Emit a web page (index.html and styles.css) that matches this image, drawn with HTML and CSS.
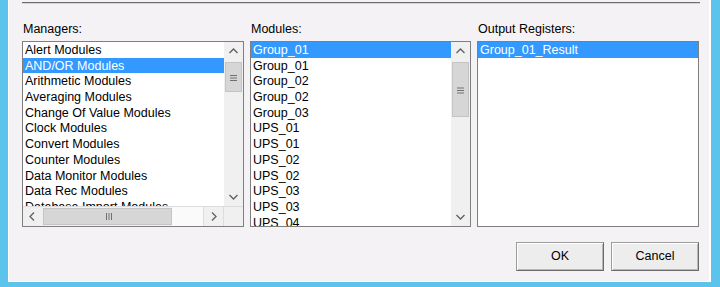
FILE: index.html
```html
<!DOCTYPE html>
<html>
<head>
<meta charset="utf-8">
<link rel="stylesheet" href="styles.css">
</head>
<body>
<div class="frame">
  <div class="dialog">
    <div class="topline"></div>
    <div class="columns">
      <div class="col">
        <div class="label">Managers:</div>
        <div class="listbox hasv hash">
          <div class="items">
            <div class="item">Alert Modules</div>
            <div class="item sel">AND/OR Modules</div>
            <div class="item">Arithmetic Modules</div>
            <div class="item">Averaging Modules</div>
            <div class="item">Change Of Value Modules</div>
            <div class="item">Clock Modules</div>
            <div class="item">Convert Modules</div>
            <div class="item">Counter Modules</div>
            <div class="item">Data Monitor Modules</div>
            <div class="item">Data Rec Modules</div>
            <div class="item">Database Import Modules</div>
          </div>
          <div class="vscroll">
            <div class="sbtn"><svg width="19" height="19" viewBox="0 0 19 19"><polyline points="5.5,11 9.5,7 13.5,11" fill="none" stroke="#606060" stroke-width="1.3"/></svg></div>
            <div class="vthumb t1"><svg width="19" height="30" viewBox="0 0 19 30"><path d="M6 12.5h7M6 15h7M6 17.5h7" stroke="#707070" stroke-width="1"/></svg></div>
            <div class="vtrack"></div>
            <div class="sbtn"><svg width="19" height="19" viewBox="0 0 19 19"><polyline points="5.5,8 9.5,12 13.5,8" fill="none" stroke="#606060" stroke-width="1.3"/></svg></div>
          </div>
          <div class="hscroll">
            <div class="sbtn"><svg width="19" height="19" viewBox="0 0 19 19"><polyline points="11,5.5 7,9.5 11,13.5" fill="none" stroke="#606060" stroke-width="1.3"/></svg></div>
            <div class="hthumb"><svg width="129" height="19" viewBox="0 0 129 19"><path d="M62.5 6v7M65 6v7M67.5 6v7" stroke="#707070" stroke-width="1"/></svg></div>
            <div class="htrack"></div>
            <div class="sbtn bl"><svg width="19" height="19" viewBox="0 0 19 19"><polyline points="8,5.5 12,9.5 8,13.5" fill="none" stroke="#606060" stroke-width="1.3"/></svg></div>
            <div class="corner"></div>
          </div>
        </div>
      </div>
      <div class="col">
        <div class="label">Modules:</div>
        <div class="listbox hasv">
          <div class="items">
            <div class="item sel">Group_01</div>
            <div class="item">Group_01</div>
            <div class="item">Group_02</div>
            <div class="item">Group_02</div>
            <div class="item">Group_03</div>
            <div class="item">UPS_01</div>
            <div class="item">UPS_01</div>
            <div class="item">UPS_02</div>
            <div class="item">UPS_02</div>
            <div class="item">UPS_03</div>
            <div class="item">UPS_03</div>
            <div class="item">UPS_04</div>
          </div>
          <div class="vscroll full">
            <div class="sbtn"><svg width="19" height="19" viewBox="0 0 19 19"><polyline points="5.5,11 9.5,7 13.5,11" fill="none" stroke="#606060" stroke-width="1.3"/></svg></div>
            <div class="vthumb t2"><svg width="19" height="55" viewBox="0 0 19 55"><path d="M6 25h7M6 27.5h7M6 30h7" stroke="#707070" stroke-width="1"/></svg></div>
            <div class="vtrack"></div>
            <div class="sbtn"><svg width="19" height="19" viewBox="0 0 19 19"><polyline points="5.5,8 9.5,12 13.5,8" fill="none" stroke="#606060" stroke-width="1.3"/></svg></div>
          </div>
        </div>
      </div>
      <div class="col">
        <div class="label">Output Registers:</div>
        <div class="listbox">
          <div class="items">
            <div class="item sel">Group_01_Result</div>
          </div>
        </div>
      </div>
    </div>
    <div class="buttons">
      <div class="btn">OK</div>
      <div class="btn">Cancel</div>
    </div>
  </div>
</div>
</body>
</html>
```
FILE: styles.css
```css
html, body {
  margin: 0;
  padding: 0;
}
body {
  width: 720px;
  height: 287px;
  overflow: hidden;
  font-family: "Liberation Sans", Arial, sans-serif;
  font-size: 12.5px;
  color: #000;
}
.frame {
  box-sizing: border-box;
  width: 720px;
  height: 287px;
  background: #5cc3ec;
  padding: 0 9px 5px 8px;
}
.dialog {
  box-sizing: border-box;
  height: 282px;
  background: #f5f2f5;
  border-left: 1px solid #ffffff;
  border-right: 2px solid #ffffff;
  border-bottom: 1px solid #ffffff;
  padding-left: 13px;
  padding-top: 2px;
}
.topline {
  width: 678px;
  height: 1px;
  background: #6e6e6e;
  border-bottom: 1px solid #d6d4d6;
}
.columns {
  display: grid;
  grid-template-columns: 222px 221px 222px;
  column-gap: 6px;
  margin-top: 18px;
}
.col {
  display: flex;
  flex-direction: column;
}
.label {
  height: 15px;
  line-height: 15px;
  margin-bottom: 4px;
  padding-left: 1px;
}
.listbox {
  box-sizing: border-box;
  height: 186px;
  border: 1px solid #7f7f7f;
  background: #ffffff;
  display: grid;
  grid-template-columns: 1fr;
  grid-template-rows: 1fr;
  overflow: hidden;
}
.listbox.hasv {
  grid-template-columns: 1fr 19px;
}
.listbox.hash {
  grid-template-rows: 1fr 20px;
}
.items {
  overflow: hidden;
  min-height: 0;
}
.item {
  height: 15.7px;
  line-height: 16.5px;
  padding-left: 2px;
  white-space: nowrap;
}
.item.sel {
  background: #3399ff;
  color: #ffffff;
}
.vscroll {
  display: flex;
  flex-direction: column;
  background: #f0f0f0;
  min-height: 0;
}
.sbtn {
  flex: 0 0 19px;
  height: 19px;
  background: #f0f0f0;
}
.sbtn svg, .vthumb svg, .hthumb svg {
  display: block;
}
.vthumb {
  box-sizing: border-box;
  margin: 1px 1px 0 1px;
  background: #d6d6d6;
  border: 1px solid #c4c4c4;
  overflow: hidden;
}
.vthumb svg {
  margin-left: -2px;
}
.vthumb.t1 {
  flex: 0 0 30px;
}
.vthumb.t2 {
  flex: 0 0 55px;
}
.vtrack {
  flex: 1;
}
.hscroll {
  grid-column: 1 / 3;
  display: flex;
  background: #f0f0f0;
  border-top: 1px solid #dcdcdc;
}
.hthumb {
  box-sizing: border-box;
  flex: 0 0 129px;
  margin: 1px 0 1px 1px;
  background: #d6d6d6;
  border: 1px solid #c4c4c4;
  overflow: hidden;
}
.hthumb svg {
  margin-top: -2px;
}
.htrack {
  flex: 1;
  background: #fafafa;
}
.sbtn.bl {
  border-left: 1px solid #dcdcdc;
  border-right: 1px solid #dcdcdc;
}
.corner {
  flex: 0 0 19px;
  background: #f0f0f0;
}
.buttons {
  width: 677px;
  display: flex;
  justify-content: flex-end;
  gap: 7px;
  margin-top: 15px;
}
.btn {
  box-sizing: border-box;
  width: 88px;
  height: 29px;
  line-height: 26px;
  text-align: center;
  background: #ededed;
  border: 1px solid;
  border-color: #9c9c9c #6b6b6b #6b6b6b #9c9c9c;
  box-shadow: inset 1px 1px 0 #ffffff, inset -1px -1px 0 #b8b8b8;
}
```
